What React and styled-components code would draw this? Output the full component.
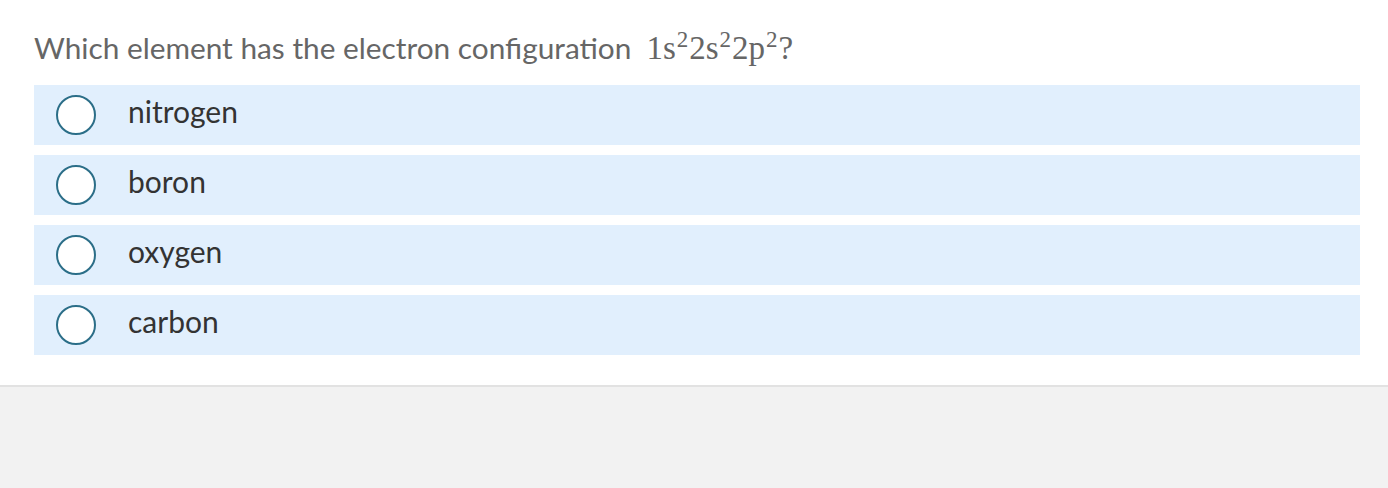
import React from "react";
import styled, { createGlobalStyle } from "styled-components";

const Global = createGlobalStyle`
  html, body { margin: 0; padding: 0; background: #f2f2f2; }
  body { font-family: Lato, "Noto Sans", sans-serif; }
`;

const Panel = styled.div`
  background: #ffffff;
  padding: 30px 28px 30px 34px;
  border-bottom: 2px solid #e2e2e2;
  height: 325px;
  box-sizing: content-box;
`;

const Question = styled.div`
  font-size: 29.8px;
  color: #666666;
  line-height: 36px;
  height: 36px;
  margin-bottom: 19px;
  white-space: nowrap;
`;

const Formula = styled.span`
  font-family: "Liberation Serif", "Times New Roman", serif;
  font-size: 33px;
  line-height: 36px;
  color: #666666;
  margin-left: 15px;
`;

const Sup = styled.sup`
  font-size: 23px;
  line-height: 0;
  vertical-align: 12px;
  margin: 0 1px;
`;

const List = styled.div`
  display: flex;
  flex-direction: column;
  gap: 10px;
`;

const Option = styled.label`
  display: flex;
  align-items: center;
  gap: 32px;
  height: 60px;
  background: #e1effd;
  padding-left: 22px;
  cursor: pointer;
`;

const Radio = styled.span`
  width: 40px;
  height: 40px;
  box-sizing: border-box;
  border-radius: 50%;
  border: 2px solid #2b6e88;
  background: #ffffff;
  flex: none;
`;

const Label = styled.span`
  padding-bottom: 8px;
  font-size: 30px;
  line-height: 36px;
  color: #333333;
`;

const options = ["nitrogen", "boron", "oxygen", "carbon"];

export default function App() {
  return (
    <>
      <Global />
      <Panel>
        <Question>
          Which element has the electron configuration
          <Formula>
            1s<Sup>2</Sup>2s<Sup>2</Sup>2p<Sup>2</Sup>?
          </Formula>
        </Question>
        <List>
          {options.map((o) => (
            <Option key={o}>
              <Radio />
              <Label>{o}</Label>
            </Option>
          ))}
        </List>
      </Panel>
    </>
  );
}
